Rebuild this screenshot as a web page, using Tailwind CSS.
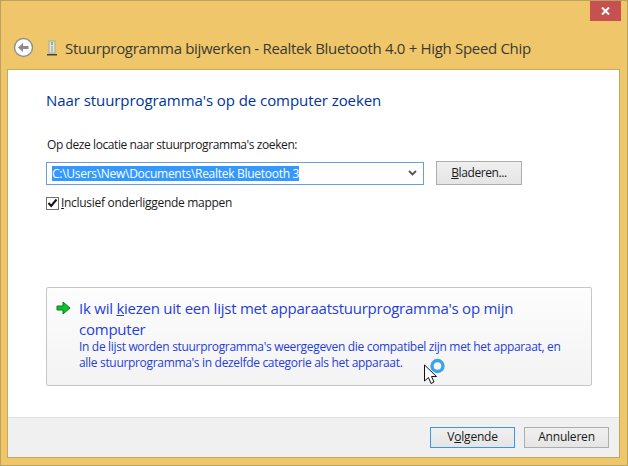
<!DOCTYPE html>
<html lang="en">
<head>
<meta charset="UTF-8">
<title>Stuurprogramma bijwerken</title>
<script src="https://cdn.jsdelivr.net/npm/@tailwindcss/browser@4"></script>
</head>
<body class="m-0 overflow-hidden bg-[#efc76a]">
<div class="relative flex h-[466px] w-[628px] flex-col border border-[#bba25e] bg-[#efc76a] font-['Open_Sans',sans-serif] text-[12px] text-[#1a1a1a]">
    <!-- close button -->
    <div class="absolute right-[6px] top-0 flex h-[20px] w-[31px] items-center justify-center bg-[#c75050]">
        <svg width="9" height="8" viewBox="0 0 9 8"><path d="M1 0.5 L8 7.5 M8 0.5 L1 7.5" stroke="#fff" stroke-width="2"/></svg>
    </div>

    <!-- title row -->
    <div class="flex h-[68px] shrink-0 items-center pl-[12px] pt-[25px]">
        <svg width="21" height="21" viewBox="0 0 21 21">
            <circle cx="10.5" cy="10.5" r="9" fill="#fdfdfd" stroke="#8f8f8f" stroke-width="1.4"/>
            <path d="M5 10.5 L10 6 V9 H15.5 V12 H10 V15 Z" fill="#8a8a8a"/>
        </svg>
        <svg class="ml-[12px]" width="12" height="16" viewBox="0 0 12 16">
            <rect x="3" y="1" width="6" height="12" fill="#e3e3e3" stroke="#a8a8a8"/>
            <rect x="5" y="2" width="2" height="3" fill="#7ec850"/>
            <rect x="5" y="6" width="2" height="6" fill="#bcbcbc"/>
            <rect x="1" y="14" width="10" height="1.5" fill="#444"/>
        </svg>
        <span class="ml-[7px] whitespace-nowrap text-[15px] leading-[20px] tracking-[-0.32px] text-[#3a3a32]">Stuurprogramma bijwerken - Realtek Bluetooth 4.0 + High Speed Chip</span>
    </div>

    <!-- white panel -->
    <div class="mb-[7px] ml-[6px] mr-[7px] flex flex-1 flex-col border border-[#c2a962] bg-white">
        <div class="flex-1 pl-[38px] pr-[28px] pt-[20px]">
            <h1 class="whitespace-nowrap text-[15px] font-normal leading-[20px] tracking-[-0.07px] text-[#003399]">Naar stuurprogramma's op de computer zoeken</h1>

            <p class="mt-[27px] whitespace-nowrap pl-[1px] leading-[16px] tracking-[-0.41px]">Op deze locatie naar stuurprogramma's zoeken:</p>

            <div class="mt-[8px] flex items-center">
                <div class="flex h-[23px] w-[378px] items-center border border-[#6a9fd6] bg-white pl-[5px] pr-[6px]">
                    <span class="whitespace-nowrap bg-[#3399ff] leading-[15px] tracking-[-0.28px] text-white">C:\Users\New\Documents\Realtek Bluetooth 3</span>
                    <svg class="ml-auto" width="9" height="6" viewBox="0 0 9 6"><path d="M1 1 L4.5 4.5 L8 1" fill="none" stroke="#555" stroke-width="1.8"/></svg>
                </div>
                <button class="ml-[12px] h-[24px] w-[86px] border border-[#adadad] bg-gradient-to-b from-[#f0f0f0] to-[#e5e5e5] text-center leading-[20px] tracking-[-0.4px]"><u>B</u>laderen...</button>
            </div>

            <label class="mt-[10px] flex items-center">
                <span class="flex h-[13px] w-[13px] items-center justify-center border border-[#707070] bg-white">
                    <svg width="11" height="10" viewBox="0 0 11 10"><path d="M1.5 5 L4.2 8 L9.5 1.5" fill="none" stroke="#111" stroke-width="2"/></svg>
                </span>
                <span class="ml-[2px] whitespace-nowrap leading-[16px] tracking-[-0.3px]"><u>I</u>nclusief onderliggende mappen</span>
            </label>

            <!-- command link -->
            <div class="mt-[76px] flex h-[99px] w-[546px] rounded-[2px] border border-[#c6c6c6] bg-gradient-to-b from-[#fdfdfd] to-[#f3f3f3] pl-[9px] pr-[10px] pt-[10px] text-[#1f3de0]">
                <svg class="mt-[3px] shrink-0" width="15" height="14" viewBox="0 0 15 14">
                    <path d="M1 5 H7 V1 L14 7 L7 13 V9 H1 Z" fill="#0cc427" stroke="#0a7a20" stroke-width="1"/>
                </svg>
                <div class="ml-[8px]">
                    <p class="w-[480px] text-[15px] leading-[21px] tracking-[-0.24px]">Ik wil <u>k</u>iezen uit een lijst met apparaatstuurprogramma's op mijn computer</p>
                    <p class="-mt-[1px] text-[12px] leading-[16px] tracking-[-0.32px]">In de lijst worden stuurprogramma's weergegeven die compatibel zijn met het apparaat, en alle stuurprogramma's in dezelfde categorie als het apparaat.</p>
                </div>
            </div>
        </div>

        <!-- footer -->
        <div class="flex h-[40px] shrink-0 items-center justify-end border-t border-[#dfdfdf] bg-[#f0f0f0] pb-[1px] pr-[10px]">
            <button class="h-[21px] w-[85px] border border-[#3d94ee] bg-gradient-to-b from-[#f0f0f0] to-[#e5e5e5] leading-[18px] tracking-[-0.2px]">V<u>o</u>lgende</button>
            <button class="ml-[9px] h-[21px] w-[85px] border border-[#adadad] bg-gradient-to-b from-[#f0f0f0] to-[#e5e5e5] leading-[18px] tracking-[-0.2px]">Annuleren</button>
        </div>
    </div>

    <!-- busy cursor -->
    <svg class="absolute left-[421px] top-[356px]" width="26" height="30" viewBox="0 0 26 30">
        <circle cx="15.5" cy="9" r="5.5" fill="none" stroke="#37a5ea" stroke-width="3.4"/>
        <path d="M2.5 8 V24 L6.5 20.5 L9 26.5 L12 25 L9.5 19.5 H14.5 Z" fill="#fff" stroke="#111" stroke-width="1"/>
    </svg>
</div>
</body>
</html>
